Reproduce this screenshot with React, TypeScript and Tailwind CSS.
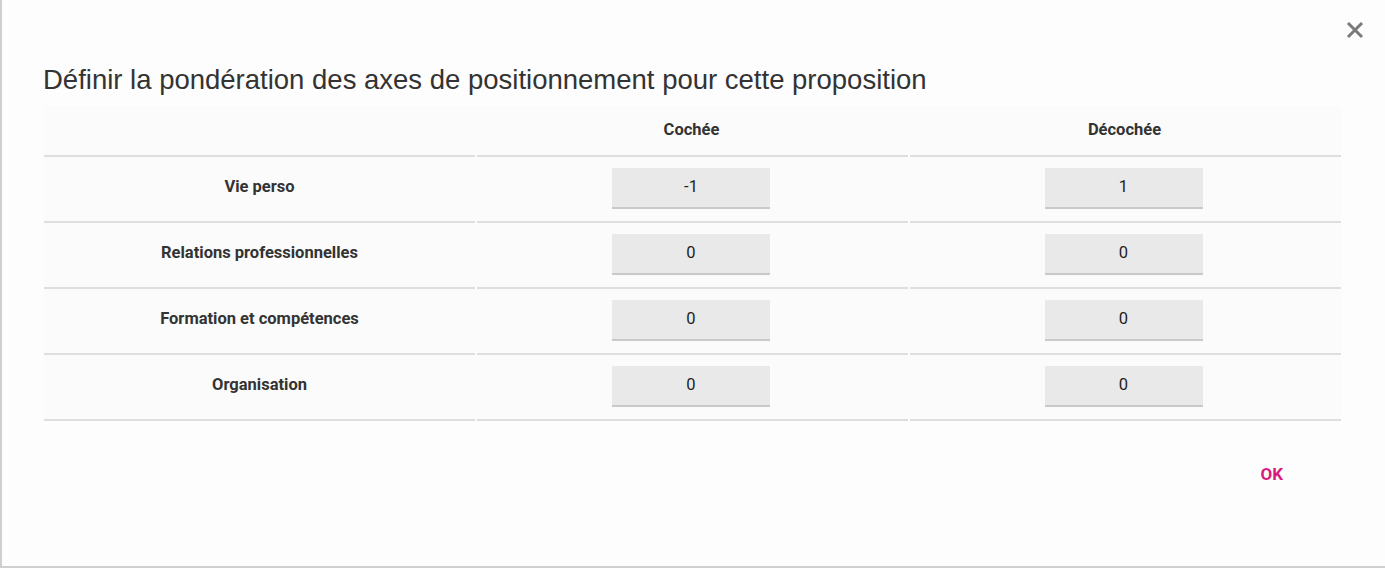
import React from "react";

const rows = [
  { label: "Vie perso", a: "-1", b: "1" },
  { label: "Relations professionnelles", a: "0", b: "0" },
  { label: "Formation et compétences", a: "0", b: "0" },
  { label: "Organisation", a: "0", b: "0" },
];

function Field({ value }: { value: string }) {
  return (
    <div className="w-[158px] h-[41px] bg-[#e9e9e9] border-b-2 border-[#c9c9c9] flex items-center justify-center text-[16.5px] text-[#1f1f1f] font-['Roboto',sans-serif]">
      {value}
    </div>
  );
}

export default function App() {
  return (
    <div className="w-[1385px] h-[568px] bg-[#fdfdfd] border-l-2 border-b-2 border-[#cfcfcf] relative font-['Roboto',sans-serif] overflow-hidden">
      <button className="absolute left-[1343px] top-[20px] w-[20px] h-[20px] flex items-center justify-center">
        <svg width="18" height="18" viewBox="0 0 18 18">
          <path d="M2 2 L16 16 M16 2 L2 16" stroke="#7a7a7a" strokeWidth="3" strokeLinecap="butt" />
        </svg>
      </button>
      <div className="pt-[63px] pl-[41px]">
        <h1 className="text-[27.5px] leading-[33px] text-[#333333] font-['Liberation_Sans',Arial,sans-serif] font-normal">
          Définir la pondération des axes de positionnement pour cette proposition
        </h1>
      </div>
      <div className="ml-[42px] mt-[10px] w-[1297px] grid grid-cols-3 gap-x-[2px] bg-[#fbfbfb]">
        <div className="h-[51px] border-b-2 border-[#dedede]" />
        <div className="h-[51px] border-b-2 border-[#dedede] flex items-center justify-center text-[16.5px] font-bold text-[#333] pr-[2px]">
          Cochée
        </div>
        <div className="h-[51px] border-b-2 border-[#dedede] flex items-center justify-center text-[16.5px] font-bold text-[#333] pr-[2px]">
          Décochée
        </div>
        {rows.map((r) => (
          <React.Fragment key={r.label}>
            <div className="h-[66px] border-b-2 border-[#dedede] flex items-center justify-center text-[16.5px] font-bold text-[#333] pb-[3px]">
              {r.label}
            </div>
            <div className="h-[66px] border-b-2 border-[#dedede] flex items-center justify-center pb-[2px] pr-[3px]">
              <Field value={r.a} />
            </div>
            <div className="h-[66px] border-b-2 border-[#dedede] flex items-center justify-center pb-[2px] pr-[4px]">
              <Field value={r.b} />
            </div>
          </React.Fragment>
        ))}
      </div>
      <div className="ml-[42px] w-[1297px] h-[70px] flex justify-end items-center pr-[58px]">
        <button className="text-[17px] font-bold text-[#d81b7c] mt-[38px]">OK</button>
      </div>
    </div>
  );
}
